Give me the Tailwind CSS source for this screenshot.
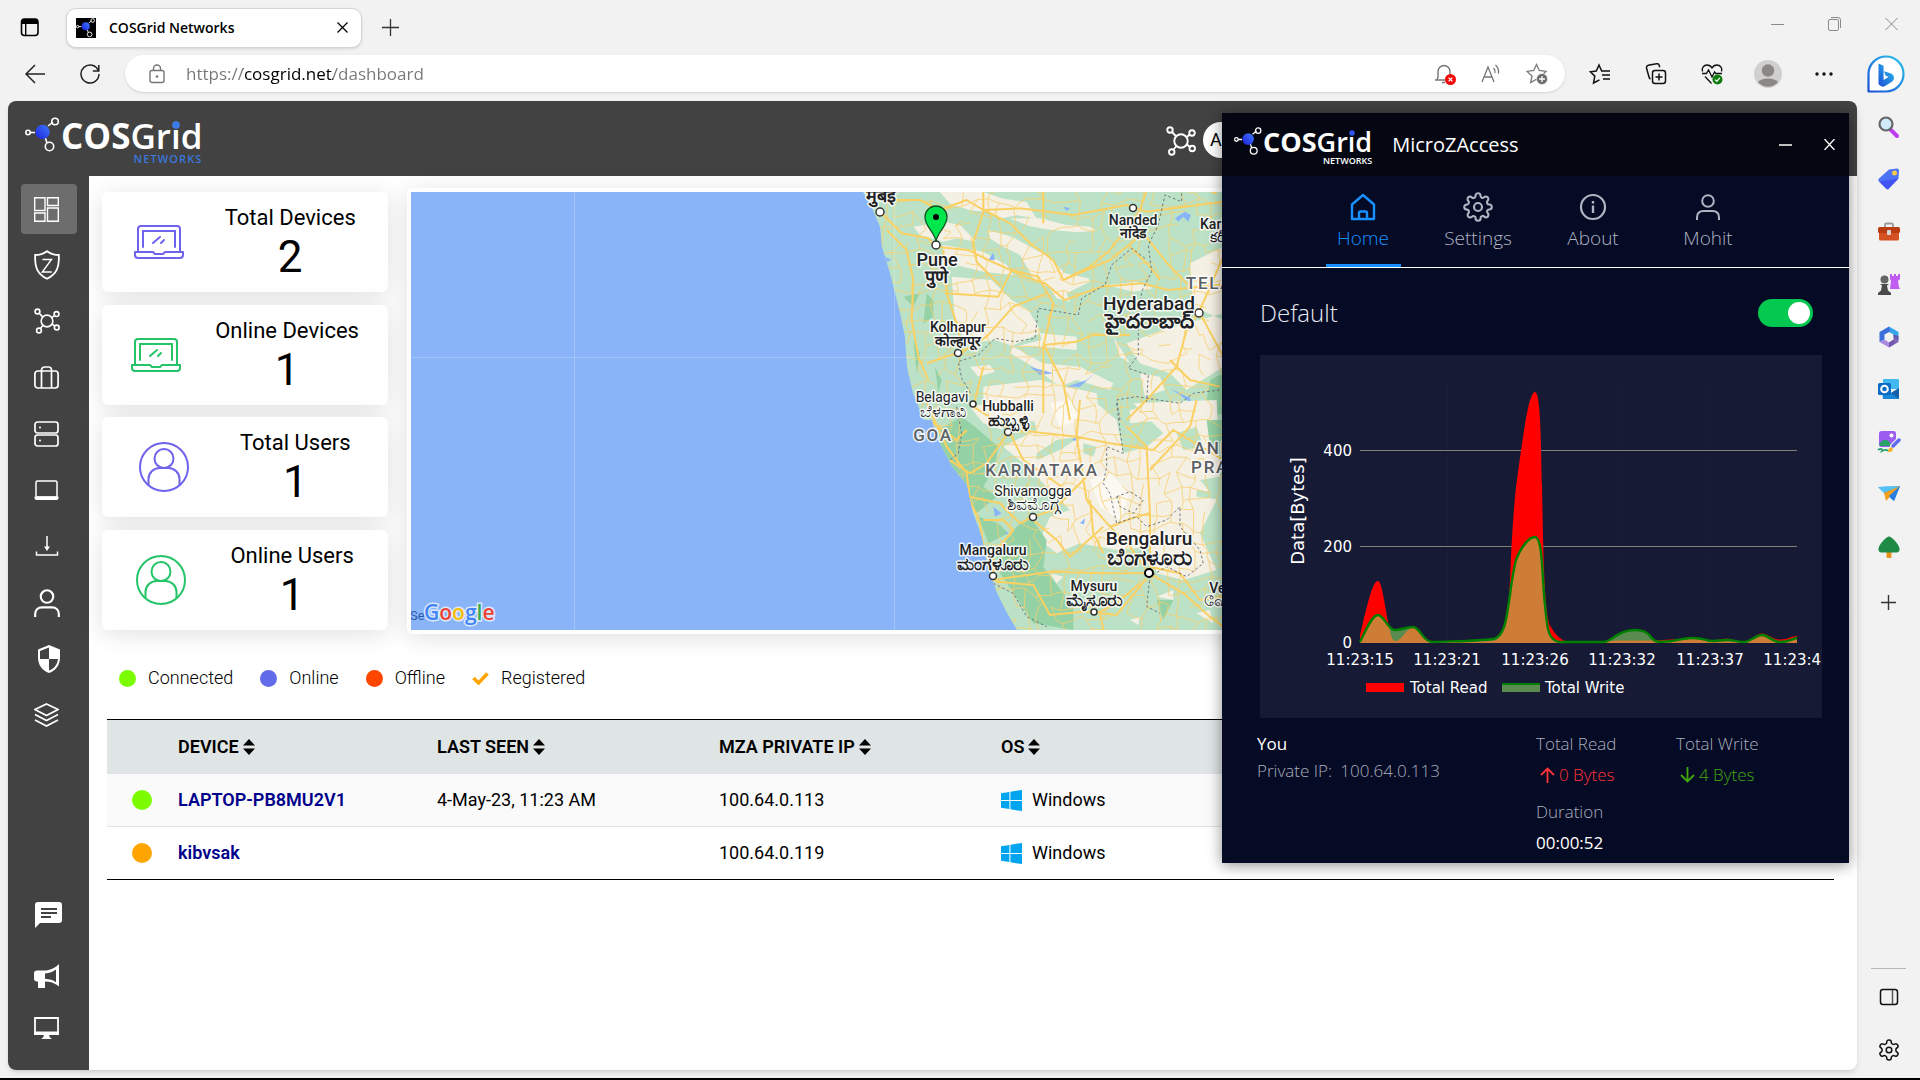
<!DOCTYPE html>
<html lang="en">
<head>
    <meta charset="UTF-8">
    <meta name="viewport" content="width=device-width, initial-scale=1.0">
    <title>COSGrid Networks</title>
    <script src="https://cdn.jsdelivr.net/npm/@tailwindcss/browser@4"></script>
    <style>
        body {
            font-family: 'Roboto', sans-serif;
        }
        .chrome {
            font-family: 'Open Sans', sans-serif;
        }
        .app {
            font-family: 'Open Sans', sans-serif;
        }
        .map-label {
            paint-order: stroke;
            stroke: #fff;
            stroke-width: 3px;
            stroke-linejoin: round;
            stroke-opacity: .85;
            text-anchor: middle;
        }
    </style>
</head>
<body class="bg-[#f2f2f2] text-black h-screen flex flex-col overflow-hidden relative">

    <!-- Shared icons -->
    <svg class="absolute w-0 h-0">
        <symbol id="hub" viewBox="0 0 24 24">
            <g fill="none" stroke="currentColor" stroke-width="1.5">
                <circle cx="12" cy="12" r="5.4" />
                <circle cx="3.2" cy="3.2" r="2.2" /><circle cx="20.8" cy="5.6" r="2.2" />
                <circle cx="4.6" cy="20.8" r="2.2" /><circle cx="21" cy="18" r="2.2" />
                <path d="M4.8 4.8 8 8.2M19 6.8 16.5 9M5.8 19 8.4 16M19.2 16.8 16.8 14.8" />
            </g>
        </symbol>
        <symbol id="laptop" viewBox="0 0 50 34">
            <g fill="none" stroke="currentColor" stroke-width="2" stroke-linecap="round">
                <path d="M4 26V4a3 3 0 0 1 3-3h36a3 3 0 0 1 3 3v22" />
                <path d="M9 22V6h32v16" />
                <path d="M1 27h18l2 2h8l2-2h18v3a3 3 0 0 1-3 3H4a3 3 0 0 1-3-3z" stroke-linejoin="round" />
                <path d="m19 18 7-6M27 18l3-3" />
            </g>
        </symbol>
        <symbol id="usercircle" viewBox="0 0 50 50">
            <g fill="none" stroke="currentColor" stroke-width="2">
                <circle cx="25" cy="25" r="24" /><circle cx="25" cy="16.500" r="9.500" />
                <path d="M9.500 43V37c0-6 5-11 11-11h9c6 0 11 5 11 11v6" />
            </g>
        </symbol>
        <symbol id="person" viewBox="0 0 24 26">
            <g fill="none" stroke="currentColor" stroke-width="2">
                <circle cx="12" cy="7" r="5.800" />
                <path d="M1 26v-2.500C1 19.500 3.500 17 7.500 17h9c4 0 6.500 2.500 6.500 6.500V26" />
            </g>
        </symbol>
        <linearGradient id="ball" x1="1" y1="0" x2="0" y2="1">
            <stop offset="0" stop-color="#3f7bff" /><stop offset="1" stop-color="#1a1fd8" />
        </linearGradient>
        <symbol id="molecule" viewBox="0 0 36 36">
            <g fill="none" stroke="#fff" stroke-width="1.600">
                <path d="M5 15.500h5M23 9l5-4M20 20l2 6" />
                <circle cx="3" cy="15.500" r="2.200" /><circle cx="30" cy="4.500" r="3.300" /><circle cx="24.500" cy="29.500" r="4.200" />
            </g>
            <circle cx="17.500" cy="15" r="7.200" fill="url(#ball)" />
        </symbol>
        <symbol id="windows" viewBox="0 0 20 20">
            <path fill="#00a4ef" d="M0 3l8-1.200v7.700H0zM9 1.600 20 0v9.500H9zM0 10.500h8v7.700L0 17zM9 10.500h11V20L9 18.400z" />
        </symbol>
        <symbol id="sort" viewBox="0 0 12 16">
            <path fill="currentColor" d="M6 0l6 6.500H0zM6 16l6-6.500H0z" />
        </symbol>
    </svg>

    <!-- Tab strip -->
    <header class="chrome flex items-center h-12 pl-5">
        <button class="mt-[6px]" aria-label="Tab actions">
            <svg class="w-5 h-5" viewBox="0 0 20 20"><rect x="1.500" y="2" width="16.500" height="16.500" rx="3" fill="none" stroke="#000" stroke-width="1.600" /><path d="M1.500 7V5a3 3 0 0 1 3-3H15a3 3 0 0 1 3 3v2zM5 7h1.400v11H5z" /></svg>
        </button>
        <div class="ml-[26px] mt-[7px] w-[296px] h-10 rounded-[10px] bg-white border border-[#d4d4d4] shadow-sm flex items-center px-[9px]">
            <svg class="w-5 h-5 bg-black" viewBox="0 0 36 36"><use href="#molecule" /></svg>
            <span class="ml-[13px] text-sm font-semibold">COSGrid Networks</span>
            <button class="ml-auto mr-1" aria-label="Close tab">
                <svg class="w-[11px] h-[11px]" viewBox="0 0 11 11"><path d="M.5.500l10 10M10.500.500l-10 10" stroke="#000" stroke-width="1.300" /></svg>
            </button>
        </div>
        <button class="ml-5 mt-[6px]" aria-label="New tab">
            <svg class="w-[17px] h-[17px]" viewBox="0 0 17 17"><path d="M8.500 0v17M0 8.500h17" stroke="#333" stroke-width="1.300" /></svg>
        </button>
        <div class="ml-auto flex items-center text-[#8a8a8a]">
            <button class="w-[57px] flex justify-center" aria-label="Minimize"><svg class="w-[13px] h-[14px]" viewBox="0 0 13 14"><path d="M0 7.500h13" stroke="currentColor" /></svg></button>
            <button class="w-[57px] flex justify-center" aria-label="Restore"><svg class="w-[13px] h-[14px]" viewBox="0 0 13 14"><g fill="none" stroke="currentColor"><rect x=".5" y="2.500" width="10" height="11" rx="1.500" /><path d="M3 .5h7a2.500 2.500 0 0 1 2.500 2.500v8" /></g></svg></button>
            <button class="w-[57px] flex justify-center" aria-label="Close"><svg class="w-[13px] h-[14px]" viewBox="0 0 13 14"><path d="M.5 1l12 12M12.500 1l-12 12" stroke="currentColor" /></svg></button>
        </div>
    </header>

    <!-- Address bar -->
    <div class="chrome flex items-center h-[51px]">
        <div class="w-[125px] flex items-center pl-[25px] gap-[35px]">
            <button aria-label="Back"><svg class="w-5 h-5" viewBox="0 0 20 20"><path d="M20 10H1M10 1l-9 9 9 9" fill="none" stroke="#222" stroke-width="1.500" /></svg></button>
            <button aria-label="Refresh"><svg class="w-5 h-5" viewBox="0 0 20 20"><path d="M18.500 7A9 9 0 1 0 19 10M18.800 1v6h-6" fill="none" stroke="#222" stroke-width="1.500" /></svg></button>
        </div>
        <div class="flex-1 h-[37px] bg-white rounded-full shadow-sm flex items-center pl-[24px] pr-[17px] text-[#767676]">
            <svg class="w-4 h-5" viewBox="0 0 16 20"><g fill="none" stroke="currentColor" stroke-width="1.400"><rect x="1" y="6.500" width="14" height="12" rx="2" /><path d="M4.500 6.500V4.500a3.500 3.500 0 0 1 7 0v2" /></g><circle cx="8" cy="12.500" r="1.300" fill="currentColor" /></svg>
            <!-- The host name is darker than the rest of the address -->
            <input type="text" aria-label="Address" value="https://cosgrid.net/dashboard" class="flex-1 ml-[21px] text-[17px] leading-6 outline-none text-transparent bg-clip-text bg-[linear-gradient(to_right,#767676_57px,#000_57px,#000_147px,#767676_147px)]">
            <div class="flex items-center gap-[24px]">
                <button aria-label="Notifications blocked"><svg class="w-[22px] h-[22px]" viewBox="0 0 22 22"><path d="M1 17h10M3 17l1-3V8.500a6 6 0 0 1 12 0V12M8 19.500h3" fill="none" stroke="currentColor" stroke-width="1.400" /><circle cx="16.500" cy="16.500" r="5.500" fill="#f00808" /><path d="M14.600 14.600l3.800 3.800M18.400 14.600l-3.800 3.800" stroke="#fff" stroke-width="1.300" /></svg></button>
                <button aria-label="Read aloud"><svg class="w-[22px] h-[22px]" viewBox="0 0 22 22"><path d="M2 19 8 4l6 15M4.200 14h7.700M13.500 5a6 6 0 0 1 1.500 5M15.500 2a10 10 0 0 1 3 8.500" fill="none" stroke="currentColor" stroke-width="1.300" /></svg></button>
                <button aria-label="Add to favorites"><svg class="w-[22px] h-[22px]" viewBox="0 0 22 22"><path d="M10.500 1.500l2.800 6 6.700.9-5 4.600 1.300 6.500-5.800-3.200-5.800 3.200L6 13 1 8.400l6.700-.9z" fill="none" stroke="currentColor" stroke-width="1.300" /><circle cx="16" cy="16" r="5.500" fill="#6b6b6b" stroke="#fff" stroke-width=".6" /><path d="M16 13v6M13 16h6" stroke="#fff" stroke-width="1.300" /></svg></button>
            </div>
        </div>
        <div class="flex items-center ml-[7px]">
            <button class="w-14 flex justify-center" aria-label="Favorites"><svg class="w-[22px] h-[22px]" viewBox="0 0 22 22"><path d="M13 8h-.3L10 2 7.300 8l-6 .8 4.500 4.300L4.500 20l6-3.200M13 8h8M13 12h8M14 16h7" fill="none" stroke="#111" stroke-width="1.500" /></svg></button>
            <button class="w-14 flex justify-center" aria-label="Collections"><svg class="w-[22px] h-[22px]" viewBox="0 0 22 22"><g fill="none" stroke="#111" stroke-width="1.500"><rect x="7.500" y="7.500" width="13" height="13" rx="2.500" /><path d="M5.500 16a3 3 0 0 1-1.500-2L1.500 5A2.500 2.500 0 0 1 3.300 2.300l8-1.500a2.500 2.500 0 0 1 3 1.800l.4 1.600M14 10.500v7M10.500 14h7" /></g></svg></button>
            <button class="w-14 flex justify-center" aria-label="Browser essentials"><svg class="w-[22px] h-[22px]" viewBox="0 0 22 22"><g fill="none" stroke="#111" stroke-width="1.300"><path d="M1.500 8.500C.5 4.500 3 2 6 2c2 0 3.800 1 5 3 1.200-2 3-3 5-3 3 0 5.500 2.500 4.500 6.500M4 13.500l6.500 7" /><path d="M1 10.500h4.500l2-3.500 3.500 7 2.500-5 1.200 1.500H21" /></g><circle cx="16.500" cy="16.500" r="5" fill="#107c10" /><path d="M14 16.600l1.800 1.800 3-3.500" fill="none" stroke="#fff" stroke-width="1.200" /></svg></button>
            <button class="w-14 flex justify-center" aria-label="Profile"><svg class="w-7 h-7" viewBox="0 0 28 28"><circle cx="14" cy="14" r="14" fill="#d2d0ce" /><circle cx="14" cy="10.500" r="6.200" fill="#8a8886" /><path d="M4 22a11 6 0 0 1 20 0 13 13 0 0 1-20 0z" fill="#8a8886" /></svg></button>
            <button class="w-14 flex justify-center" aria-label="More"><svg class="w-[18px] h-1" viewBox="0 0 18 4"><g fill="#111"><circle cx="2" cy="2" r="1.700" /><circle cx="9" cy="2" r="1.700" /><circle cx="16" cy="2" r="1.700" /></g></svg></button>
            <button class="w-[68px] flex justify-center" aria-label="Discover">
                <svg class="w-[38px] h-[38px]" viewBox="0 0 38 38">
                    <defs><linearGradient id="bing" x1="0" y1="1" x2="1" y2="0"><stop offset="0" stop-color="#1b4fd6" /><stop offset="1" stop-color="#2bc4ee" /></linearGradient></defs>
                    <path d="M1.500 36.500V19A17.500 17.500 0 1 1 19 36.500z" fill="#fff" stroke="url(#bing)" stroke-width="2.200" stroke-linejoin="round" />
                    <path d="M11.500 8.500l4.500 2a1 1 0 0 1 .6 1v13.500l5-3-2.600-1.200a1 1 0 0 1-.6-.6l-1.300-4 7 2.300c3.500 1.500 4 6.500.5 8.500l-6.500 4c-1.500.9-3 .8-4.200 0l-1.500-1a2 2 0 0 1-.9-1.700z" fill="url(#bing)" />
                </svg>
            </button>
        </div>
    </div>

    <div class="flex-1 flex min-h-0 mt-[2px] pl-2 mb-[10px]">

        <!-- Dashboard page -->
        <div class="flex-1 flex flex-col bg-white rounded-lg overflow-hidden shadow-md">
            <header class="h-[75px] shrink-0 bg-[#424242] flex items-center">
                <a href="#" class="chrome ml-[17px] mb-[7px] flex items-center text-white leading-none">
                    <svg class="w-9 h-9"><use href="#molecule" /></svg>
                    <span class="relative block text-[35px] font-bold">COS<span class="font-semibold">Gr<span class="relative">i<span class="absolute left-1/2 -translate-x-1/2 top-[9px] w-2 h-2 rounded-full bg-[#3f7be8] outline-1 outline-[#424242]"></span></span>d</span>
                        <span class="absolute right-0 top-[35px] text-[11px] font-semibold tracking-widest text-[#3b77dc]">NETWORKS</span>
                    </span>
                </a>
                <svg class="w-[30px] h-[30px] ml-auto mt-1 text-white"><use href="#hub" /></svg>
                <span class="ml-[7px] mr-[618px] mt-[2px] w-[36px] h-[36px] rounded-full bg-white text-lg flex items-center pl-[7px]">A</span>
            </header>

            <div class="flex-1 flex min-h-0">
                <nav class="w-[81px] shrink-0 bg-[#424242] text-white flex flex-col items-center pt-2 pb-[31px]">
                    <div class="flex flex-col justify-between h-[556px]">
                        <a href="#" aria-label="Dashboard" class="w-14 h-[50px] pr-1 rounded bg-[#6d6d6d] flex items-center justify-center"><svg class="w-[25px] h-[25px]" viewBox="0 0 25 25"><g fill="none" stroke="currentColor" stroke-width="1.400"><path d="M.7.700h10.300v12.800H.7zM13.500.700h10.800v7.800H13.500zM.7 16h10.300v8.300H.7zM13.500 11h10.800v13.300H13.500z" /></g></svg></a>
                        <a href="#" aria-label="Zero trust" class="w-14 h-[50px] pr-1 flex items-center justify-center"><svg class="w-[26px] h-[30px]" viewBox="0 0 26 30"><g fill="none" stroke="currentColor"><path stroke-width="1.800" d="M13 1.200C9.500 3.800 5.500 5 1.200 5c-.6 12 2 19 11.800 23.800C22.800 24 25.400 17 24.800 5 20.500 5 16.500 3.800 13 1.200z" /><path stroke-width="1.400" d="M8.500 9.500h9l-9.200 12.500h9.500" /></g></svg></a>
                        <a href="#" aria-label="Network" class="w-14 h-[50px] pr-1 flex items-center justify-center"><svg class="w-[26px] h-[26px]"><use href="#hub" /></svg></a>
                        <a href="#" aria-label="Assets" class="w-14 h-[50px] pr-1 flex items-center justify-center"><svg class="w-[25px] h-[23px]" viewBox="0 0 25 23"><g fill="none" stroke="currentColor" stroke-width="1.700"><rect x=".9" y="5" width="23.200" height="17" rx="3" /><path d="M7.500 22V4a3 3 0 0 1 3-3h4a3 3 0 0 1 3 3v18" /></g></svg></a>
                        <a href="#" aria-label="Servers" class="w-14 h-[50px] pr-1 flex items-center justify-center"><svg class="w-[25px] h-[26px]" viewBox="0 0 25 26"><g fill="none" stroke="currentColor" stroke-width="1.700"><rect x="1" y="1" width="23" height="11" rx="2.500" /><rect x="1" y="14" width="23" height="11" rx="2.500" /></g><circle cx="6" cy="6.500" r="1" fill="#fff" /><circle cx="6" cy="19.500" r="1" fill="#fff" /></svg></a>
                        <a href="#" aria-label="Devices" class="w-14 h-[50px] pr-1 flex items-center justify-center"><svg class="w-[25px] h-[20px]" viewBox="0 0 25 20"><rect x="2" y="1" width="21" height="16" rx="1.500" fill="none" stroke="currentColor" stroke-width="1.500" /><path d="M.5 16.500h24v1.500a2 2 0 0 1-2 2h-20a2 2 0 0 1-2-2z" fill="currentColor" /></svg></a>
                        <a href="#" aria-label="Downloads" class="w-14 h-[50px] pr-1 flex items-center justify-center"><svg class="w-[24px] h-[20px]" viewBox="0 0 24 20"><path d="M12 0v12M1.500 15.500V19h21v-3.500" fill="none" stroke="currentColor" stroke-width="1.500" /><path d="M9 10.500h6l-3 4.500z" fill="currentColor" /></svg></a>
                        <a href="#" aria-label="Users" class="w-14 h-[50px] pr-1 flex items-center justify-center"><svg class="w-[26px] h-[28px]"><use href="#person" /></svg></a>
                        <a href="#" aria-label="Security" class="w-14 h-[50px] flex items-center justify-center"><svg class="w-[22px] h-[28px]" viewBox="0 0 22 28"><path fill="currentColor" d="M11 0l11 4.500V12c0 8-4 13.500-11 16C4 25.500 0 20 0 12V4.500z" /><path fill="#424242" d="M11 2.500 2 6v8h9zM11 14h9c-.6 5.500-3.500 9.500-9 11.500z" /></svg></a>
                        <a href="#" aria-label="Policies" class="w-14 h-[50px] pr-1 flex items-center justify-center"><svg class="w-[25px] h-[24px]" viewBox="0 0 25 24"><path d="M12.500 1 24 6.500l-11.500 6L1 6.500zM1 11.500l11.500 6 11.500-6M1 17l11.500 6L24 17" fill="none" stroke="currentColor" stroke-width="1.700" /></svg></a>
                    </div>
                    <div class="mt-auto pr-1 flex flex-col items-center">
                        <a href="#" aria-label="Chat" class="pl-1 mb-9"><svg class="w-[27px] h-[26px]" viewBox="0 0 27 26"><path fill="currentColor" d="M3 0h21a3 3 0 0 1 3 3v15a3 3 0 0 1-3 3H5l-5 5V3a3 3 0 0 1 3-3z" /><path d="M6 7h16M6 11h16M6 15h10" stroke="#424242" stroke-width="2" /></svg></a>
                        <a href="#" aria-label="Announcements" class="mb-[29px]"><svg class="w-[25px] h-[24px]" viewBox="0 0 25 24"><path fill="currentColor" fill-rule="evenodd" d="M25 0v22.500c-3-2.500-6.500-4.300-10.500-4.800L11 17.500V24H4v-6.500H3a3 3 0 0 1-3-3V9.500a3 3 0 0 1 3-3h7C16 6.500 21 4 25 0zM22 5.500c-3.200 2.300-6.500 3.600-11 4v5.300c4.500.3 8 1.500 11 3.400z" /></svg></a>
                        <a href="#" aria-label="Monitor"><svg class="w-[25px] h-[22px]" viewBox="0 0 25 22"><path d="M1 1h23v15H1z" fill="none" stroke="currentColor" stroke-width="1.800" /><path fill="currentColor" d="M0 14.500h25V18H15l1 2.500 2 1.500H7l2-1.500L10 18H0z" /></svg></a>
                    </div>
                </nav>

                <main class="flex-1 min-w-0 pt-4">
                    <div class="flex h-[438px] pl-[13px] pr-[23px] gap-[19px]">
                        <!-- Stats -->
                        <div class="w-[286px] shrink-0 flex flex-col justify-between">
                            <section class="h-[100px] px-3 bg-white rounded-md shadow-[0_4px_24px_rgba(0,0,0,0.12)] flex items-center justify-around">
                                <svg class="w-[50px] h-[34px] text-[#6f63ee]"><use href="#laptop" /></svg>
                                <div class="text-center"><h2 class="text-[22px] leading-[30px]">Total Devices</h2><p class="text-[44px] leading-[48px]">2</p></div>
                            </section>
                            <section class="h-[100px] px-3 bg-white rounded-md shadow-[0_4px_24px_rgba(0,0,0,0.12)] flex items-center justify-around">
                                <svg class="w-[50px] h-[34px] text-[#26c468]"><use href="#laptop" /></svg>
                                <div class="text-center"><h2 class="text-[22px] leading-[30px]">Online Devices</h2><p class="text-[44px] leading-[48px]">1</p></div>
                            </section>
                            <section class="h-[100px] px-3 bg-white rounded-md shadow-[0_4px_24px_rgba(0,0,0,0.12)] flex items-center justify-around">
                                <svg class="w-[50px] h-[50px] text-[#6f63ee]"><use href="#usercircle" /></svg>
                                <div class="text-center"><h2 class="text-[22px] leading-[30px]">Total Users</h2><p class="text-[44px] leading-[48px]">1</p></div>
                            </section>
                            <section class="h-[100px] px-3 bg-white rounded-md shadow-[0_4px_24px_rgba(0,0,0,0.12)] flex items-center justify-around">
                                <svg class="w-[50px] h-[50px] text-[#26c468]"><use href="#usercircle" /></svg>
                                <div class="text-center"><h2 class="text-[22px] leading-[30px]">Online Users</h2><p class="text-[44px] leading-[48px]">1</p></div>
                            </section>
                        </div>

                        <!-- Map -->
                        <div class="flex-1 -my-1 border-4 border-white rounded-md shadow-[0_4px_24px_rgba(0,0,0,0.12)]">
                            <svg id="map" class="block w-full h-full bg-[#8ab4f8]" viewBox="0 0 1423 438" preserveAspectRatio="xMinYMin slice">
                                <defs>
                                    <clipPath id="land"><path d="M452 0l9 16 8 19 2 20 8 26 10 40 5 24 2 30 6 26 11 27 8 0 5 17 10 20 6 11 14 17 6 28 9 24 6 30 9 26 10 20 10 17H1423V0z" /></clipPath>
                                </defs>
                                <g clip-path="url(#land)">
                                    <path fill="#bbe2c6" d="M440 0h983v438H440z" />
                                    <!-- northern half -->
                                    <g transform="translate(439 -12) scale(.3333)" fill="#f5f0e4">
                                        <path d="M270 36h130l60 20 70 10 30 50-60-10-50 10-30-20-60-5-60-20zM480 115l90 0 80 20 70 5 20 12-60 5-80-8-60-10zM415 150l70 20 110 60 50 50 70 15 5 10-70 35 10 25-40-10-20-30-50-30-40-70-60-30-30-20zM190 140l90-15 50 10 50 50-60-10-40 10-70-20zM280 195l120 20 70 40 20 30-90-10-120-30zM305 290l120 10 60 60 50 30 30 50 10 40-80 20-60-20-80 10-40-60zM480 500l90 0 110 10 0-40-110-10zM490 500l90 50 110 10 100 50-10 20-100-30-50 20-80-60-70-40zM400 620l170-20 80 20 90 20 10 90-350-10zM360 560l60-5 15 20-50 15zM830 490l40 60 90 30 50 50 110-70V400l-180 50zM790 470l50 80-30-20zM1020 250l100-50v220l-90-40zM770 315l90-10 50 20-60 10zM840 690l90-20 20 50-110 10zM870 580l60 10 15 40-60 20z" />
                                        <path fill="#94d2a5" d="M230 340l20 20 0 50-30 20zM160 350l50-10-20 40zM255 560l20 40-10 40zM1080 600l40-20v120l-60 20zM190 480l20 40-10 60z" />
                                        <path fill="#8ab4f8" d="M975 115l30-20 18 10-8 20-15-15-15 15zM415 240l15-22 5 22zM640 80l20 5-10 8zM540 560l70 20-40 5zM650 620l60-20 30-25-50 45zM960 625l60 30 5 15zM105 230l20 10-15 5z" />
                                    </g>
                                    <!-- southern half -->
                                    <g transform="translate(439 208) scale(.3333)" fill="#f5f0e4">
                                        <path d="M540 10h200l60 50 20 100 70-20 50-40-90-90 250-10 10 230-60 10 50 60-50 100 50 110-100 30-80-20-20-80-100 10-110-20-70 30-50-40 30-70 60-20-60-60-80-80-60-50 100-50z" />
                                        <path d="M360 20l60-10 40 80-60-20zM920 590l50-20 0 30zM840 660l30-10-5 25zM1040 640l40-10 10 40zM600 520l40 10-20 20z" />
                                        <path fill="#bbe2c6" d="M560 160l60-40 70-10-60 40-70 30zM700 130l40 10-10 30-30-10zM1040 270l80 10v20l-80-10zM980 100l60-20 20 60-60 10z" />
                                        <path fill="#fcf8f2" d="M600 10l60-10 30 60-60 20zM720 240l60-20 60 60-30 80-60-40z" />
                                        <path fill="#94d2a5" d="M265 90l70-40 40 30 70 60-10 60-35 60 40 30-60 50-60-120-50-70zM385 350l60 20 30 30-60 30zM500 380l40-30 50 70-10 80 90 120 0 70-120-20-100-150-10-60zM920 600l50 0-30 60zM1070 60h60v120l-50-40z" />
                                        <path fill="#8ab4f8" d="M430 320l25 20-20 10zM665 120l15-10-2 12zM690 370l15-15-3 18zM465 400l10-6-5 10z" />
                                    </g>
                                    <g id="minor" fill="none" stroke="#f8cf6f" stroke-width=".8"></g>
                                    <g fill="none" stroke-linejoin="round" stroke="#fad063" stroke-width="6">
                                        <path transform="translate(439 -12) scale(.3333)" d="M130 60l80 0 60 30 80-30 50 30 110-5 160 20 160-30 60 20 230-30M400 36l0 60-30 90 10 60 70 70M95 100l60 60 80 15 20 25 100 10 60 30 110 50 60 20 60 50 110-40 120-10 80 20 200-20M110 150l60 60 20 90-5 120 20 110 30 70M280 210l10 130 30 90 20 90M285 340l160 10 40-80 80 20 45 80-30 130 0 200M330 520l80-50 80-90 100-40M400 90l80 40 60 60 70 50 30 60 80-40 60-50 90-120 20-60 150-10 60 20M580 130l0-94M640 300l140-60 100-80 80 100 60 60M580 495l100-10 50-20 110 0M840 200l60 60 30 40M230 550l90-30M370 680l30-120M1050 390l-40 60-30 110-90 100-60 60M1050 390l70-160M1050 400l70 130M580 490l60 120 20 110M960 540l60 60 90 20" />
                                        <path transform="translate(439 208) scale(.3333)" d="M230 10l60 130 60 80 10 80 30 70 20 130 40 120 40 70M240 60l80 60 30-30M300 180l60 40 50-30 70-100-110-70M480 100l40 80 130 90M500 90l180 20 100 20 130 20 60-60 150 90M680 110l30 190 70 80 80-30 40-10-10-200-60-60M360 290l90 20 60 60 40-20 60-20 60-60 60-60M550 360l70 60 40 50 100-90M400 360l60 0 30 30-60 70 0 60M430 540l170-25 160 5 130 0 20 0M440 545l110 10 50 90 100-10 20 0 80 10 90-110M740 640l60-30 70-60M900 340l0 160 90 20 60 80 70-10M900 520l100 60 80 70 40 30M780 380l60 60 50 70M690 0l-10 110M900 210l120-130 20-80M760 690l-10-50M720 300l10 100 30 60" />
                                    </g>
                                    <g fill="none" stroke="#6f7780" stroke-width="3" stroke-dasharray="8 7">
                                        <path transform="translate(439 -12) scale(.3333)" d="M995 40l0 25-50-20-20 90-30 60 10 80-30 60-10 120 0 70-30 40 60 20-5 80M885 235l-40-30-60 50-20 60-70 40-10 50-120-20-10 90-60 10-60-10-50 50-60 20 10 50 30 50M810 720l-10-60 60-10 130 20 40-30 80-10" />
                                        <path transform="translate(439 208) scale(.3333)" d="M320 20l15 80-10 60-25 20M800 10l10 80 10 70-50-20 0 60-10 50 20 30 20 90 60-20 30 30 60-20 40-40 0 60 60 70 10 40-50 40-60-30-50 30-10 90 40 20M800 290l40-15 40 25-30 40-40-20zM430 550l60 30 40 70 60 30" />
                                    </g>
                                </g>
                                <path d="M163.500 0v438M483.500 0v438M0 165.500h1423" stroke="#fff" stroke-opacity=".22" />

                                <!-- City markers -->
                                <g fill="#fff" stroke="#333" stroke-width="1.500">
                                    <circle cx="469" cy="20" r="4" /><circle cx="525" cy="53" r="4" /><circle cx="722" cy="16" r="3.500" /><circle cx="547" cy="161" r="3.500" /><circle cx="788" cy="121" r="4" /><circle cx="562" cy="212" r="3" /><circle cx="597" cy="240" r="3.500" /><circle cx="622" cy="325" r="3.500" /><circle cx="582" cy="384" r="3.500" /><circle cx="738" cy="381" r="4" stroke="#000" stroke-width="2" /><circle cx="683" cy="420" r="3" />
                                </g>
                                <g class="map-label" fill="#202124" font-weight="500" font-size="14">
                                    <text x="470" y="10" font-size="18" font-weight="700">मुंबई</text>
                                    <text x="526" y="74" font-size="18">Pune</text><text x="525" y="91" font-size="18" font-weight="700">पुणे</text>
                                    <text x="722" y="33">Nanded</text><text x="722" y="46" font-weight="700">नांदेड</text>
                                    <text x="789" y="37" text-anchor="start">Karim</text><text x="799" y="50" text-anchor="start">కరీం</text>
                                    <text x="547" y="140">Kolhapur</text><text x="547" y="154" font-weight="700">कोल्हापूर</text>
                                    <text x="738" y="118" font-size="19">Hyderabad</text><text x="738" y="136" font-size="20" font-weight="700">హైదరాబాద్</text>
                                    <text x="531" y="210" font-weight="400">Belagavi</text><text x="532" y="225" font-size="16" font-weight="400">ಬೆಳಗಾವಿ</text>
                                    <text x="597" y="219">Hubballi</text><text x="597" y="234" font-size="17" font-weight="700">ಹುಬ್ಬಳ್ಳಿ</text>
                                    <text x="622" y="304" font-weight="400">Shivamogga</text><text x="622" y="318" font-size="17" font-weight="400">ಶಿವಮೊಗ್ಗ</text>
                                    <text x="582" y="363">Mangaluru</text><text x="582" y="378" font-size="18" font-weight="700">ಮಂಗಳೂರು</text>
                                    <text x="738" y="353" font-size="19">Bengaluru</text><text x="738" y="373" font-size="23" font-weight="700">ಬೆಂಗಳೂರು</text>
                                    <text x="683" y="399">Mysuru</text><text x="683" y="414" font-size="18" font-weight="700">ಮೈಸೂರು</text>
                                    <text x="820" y="401">Vellore</text><text x="816" y="414">வேலூர்</text>
                                </g>
                                <g class="map-label tracking-widest" fill="#5c6166" font-weight="500" font-size="17">
                                    <text x="522" y="249">GOA</text><text x="631" y="284">KARNATAKA</text>
                                    <text x="832" y="97">TELANGANA</text><text x="822" y="262">ANDHRA</text><text x="824" y="281">PRADESH</text>
                                </g>
                                <!-- Pin -->
                                <path d="M525 50c-1-10-11-15-11-25a11 11 0 0 1 22 0c0 10-10 15-11 25z" fill="#00e64d" stroke="#145523" stroke-width="1.300" />
                                <circle cx="525" cy="25" r="3" />
                                <text x="-1" y="428" font-size="13" fill="#2a5db0">Se</text>
                                <text x="13" y="428" font-family="Open Sans" font-weight="600" font-size="21" stroke="#fff" stroke-opacity=".7" stroke-width="3" paint-order="stroke"><tspan fill="#4285f4">G</tspan><tspan fill="#ea4335">o</tspan><tspan fill="#fbbc05">o</tspan><tspan fill="#4285f4">g</tspan><tspan fill="#34a853">l</tspan><tspan fill="#ea4335">e</tspan></text>
                            </svg>
                        </div>
                    </div>

                    <!-- Legend -->
                    <ul class="flex items-center gap-[27px] mt-[36px] pl-[30px] text-lg leading-6 font-light">
                        <li class="flex items-center gap-3"><span class="w-[17px] h-[17px] rounded-full bg-[#7cfc00]"></span>Connected</li>
                        <li class="flex items-center gap-3"><span class="w-[17px] h-[17px] rounded-full bg-[#626be8]"></span>Online</li>
                        <li class="flex items-center gap-3"><span class="w-[17px] h-[17px] rounded-full bg-[#ff4500]"></span>Offline</li>
                        <li class="flex items-center gap-3"><svg class="w-[17px] h-[13px]" viewBox="0 0 17 13"><path d="M1.500 6l5 5 9-9.500" fill="none" stroke="orange" stroke-width="3.500" /></svg>Registered</li>
                    </ul>

                    <!-- Devices -->
                    <div class="mt-[29px] pl-[18px] pr-[23px]">
                        <table class="w-full table-fixed border-y border-black text-left text-lg leading-6">
                            <colgroup><col class="w-[71px]"><col class="w-[259px]"><col class="w-[282px]"><col class="w-[282px]"><col></colgroup>
                            <thead class="bg-[#dfe5e5]">
                                <tr class="h-[54px] border-b border-[#dee2e6]">
                                    <th aria-label="Status"></th>
                                    <th><button class="flex items-center gap-1 font-semibold">DEVICE <svg class="w-3 h-4"><use href="#sort" /></svg></button></th>
                                    <th><button class="flex items-center gap-1 font-semibold">LAST SEEN <svg class="w-3 h-4"><use href="#sort" /></svg></button></th>
                                    <th><button class="flex items-center gap-1 font-semibold">MZA PRIVATE IP <svg class="w-3 h-4"><use href="#sort" /></svg></button></th>
                                    <th><button class="flex items-center gap-1 font-semibold">OS <svg class="w-3 h-4"><use href="#sort" /></svg></button></th>
                                </tr>
                            </thead>
                            <tbody>
                                <tr class="h-[53px] border-b border-[#dee2e6] bg-[#fafafa]">
                                    <td><span class="block ml-[25px] w-5 h-5 rounded-full bg-[#7cfc00]"></span></td>
                                    <td><a href="#" class="font-semibold text-[#00008b]">LAPTOP-PB8MU2V1</a></td>
                                    <td>4-May-23, 11:23 AM</td>
                                    <td>100.64.0.113</td>
                                    <td><span class="flex items-center gap-[10px]"><svg class="w-[21px] h-[21px]"><use href="#windows" /></svg>Windows</span></td>
                                </tr>
                                <tr class="h-[53px]">
                                    <td><span class="block ml-[25px] w-5 h-5 rounded-full bg-[#ffa500]"></span></td>
                                    <td><a href="#" class="font-semibold text-[#00008b]">kibvsak</a></td>
                                    <td></td>
                                    <td>100.64.0.119</td>
                                    <td><span class="flex items-center gap-[10px]"><svg class="w-[21px] h-[21px]"><use href="#windows" /></svg>Windows</span></td>
                                </tr>
                            </tbody>
                        </table>
                    </div>
                </main>
            </div>
        </div>

        <!-- Browser side bar -->
        <aside class="w-[63px] flex flex-col items-center">
            <div class="flex flex-col justify-between h-[500px] mt-[14px]">
                <button class="w-6 h-6" aria-label="Search"><svg viewBox="0 0 24 24"><path d="M14 15l6 6" stroke="#c13df0" stroke-width="4" stroke-linecap="round" /><circle cx="9" cy="9" r="6.500" fill="#cfeaf8" stroke="#666" stroke-width="2.200" /></svg></button>
                <button class="w-6 h-6" aria-label="Shopping"><svg viewBox="0 0 24 24"><path d="M12 2.500l8-1a2 2 0 0 1 2 2l-.5 8L12 21.500a2 2 0 0 1-3 0L2 14.500a2 2 0 0 1 0-3z" fill="#4c73f5" /><path d="M2 14.500l7 7a2 2 0 0 0 3 0l9.500-10z" fill="#3a3fee" opacity=".6" /><circle cx="17.500" cy="6" r="2.500" fill="#f9c846" /></svg></button>
                <button class="w-6 h-6" aria-label="Tools"><svg viewBox="0 0 24 24"><path d="M8 7V5a1.500 1.500 0 0 1 1.500-1.500h5A1.500 1.500 0 0 1 16 5v2" fill="none" stroke="#999" stroke-width="1.800" /><rect x="2" y="11" width="20" height="9.500" rx="1.500" fill="#d35122" /><rect x="1" y="7" width="22" height="6" rx="1.500" fill="#b93d10" /><rect x="10" y="10" width="4" height="5" rx="1" fill="#d8d8d8" /></svg></button>
                <button class="w-6 h-6" aria-label="Games"><svg viewBox="0 0 24 24"><path d="M13 2h2v2h2V2h2v2h2V2h2v5l-2 2 1 6 1 2H13l1-8-1-2z" fill="#c05cf2" /><circle cx="7.500" cy="7.500" r="4" fill="#666" /><path d="M3 12h9l-2 1.500 1 5 3 2.500v2H1v-2l3-2.500 1-5z" fill="#4a4a4a" /></svg></button>
                <button class="w-6 h-6" aria-label="Microsoft 365"><svg viewBox="0 0 24 24"><path d="M12 1.500 21.500 7v8l-5-3V9.500L12 7z" fill="#35a4e8" /><path d="M12 1.500 2.500 7v10l5-2.500v-5L13 6.500z" fill="#3b6fd9" /><path d="M2.500 17 12 22.500l5-3v-5l-5 3-4.500-3z" fill="#a98ae0" /><path d="M21.500 11v6L12 22.500v-5l4.500-3v-5z" fill="#6b4ca8" opacity=".85" /></svg></button>
                <button class="w-6 h-6" aria-label="Outlook"><svg viewBox="0 0 24 24"><path d="M6 3a1 1 0 0 1 1-1h14a1 1 0 0 1 1 1v9H6z" fill="#41b8f0" /><path d="M22 11v10a1 1 0 0 1-1 1H6l-1-8 8 3z" fill="#1a86d8" /><path d="M14 16l8 6V11z" fill="#1560a8" /><rect x="1" y="6" width="13" height="12" rx="1.500" fill="#0a6cc4" /><circle cx="7.500" cy="12" r="3.300" fill="none" stroke="#fff" stroke-width="2" /></svg></button>
                <button class="w-6 h-6" aria-label="Image Creator"><svg viewBox="0 0 24 24"><rect x="2" y="1" width="17" height="16" rx="2.500" fill="#9c5cf0" /><circle cx="14.500" cy="5.500" r="2" fill="#fff" /><path d="M2 14c5-6 9-6 13 2H4.500A2.500 2.500 0 0 1 2 14z" fill="#28a267" /><path d="M1 20c3-2 5-1 4 1 2-1 5-2 6 0" fill="none" stroke="#28a267" stroke-width="1.800" /><path d="M16 16l6-6" stroke="#f2f2f2" stroke-width="6" stroke-linecap="round" /><path d="M16 16l6-6" stroke="#5f6cf2" stroke-width="3.500" stroke-linecap="round" /><path d="M11 22c0-3 1.500-5 3.500-4.500s2.500 5-3.500 4.500z" fill="#f5b324" /></svg></button>
                <button class="w-6 h-6" aria-label="Drop"><svg viewBox="0 0 24 24"><path d="M1 5l22-1-6 15-5-4z" fill="#3a9ef0" /><path d="M1 5l6 6 16-7z" fill="#56c1f5" /><path d="M7 11l16-7L9 19z" fill="#f2a01e" /><path d="M12 14l11-10-6 15z" fill="#2b7ce0" /></svg></button>
                <button class="w-6 h-6" aria-label="E-tree"><svg viewBox="0 0 24 24"><rect x="9.500" y="16" width="5" height="7" rx="1" fill="#e8931c" /><path d="M12 1.500c2.500 0 9.500 7 10.500 12 .4 2.500-1 4-3 4h-15c-2 0-3.400-1.500-3-4 1-5 8-12 10.500-12z" fill="#1f8a44" /></svg></button>
                <button class="w-6 h-6 mt-1 flex items-center justify-center" aria-label="Customize"><svg class="w-[15px] h-[15px]" viewBox="0 0 15 15"><path d="M7.500 0v15M0 7.500h15" stroke="#333" stroke-width="1.400" /></svg></button>
            </div>
            <div class="mt-auto w-[35px] border-t border-[#b8b8b8] flex flex-col items-center pt-[16px] pb-2 gap-[29px]">
                <button aria-label="Hide sidebar"><svg class="block w-6 h-6" viewBox="0 0 24 24"><rect x="3.500" y="4.500" width="17" height="15" rx="2.500" fill="none" stroke="#111" stroke-width="1.500" /><path d="M15.500 5v14" stroke="#555" stroke-width="1.500" /></svg></button>
                <button aria-label="Settings"><svg class="block w-6 h-6" viewBox="0 0 24 24"><g fill="none" stroke="#111" stroke-width="1.500"><path d="M12.220 2h-.44a2 2 0 0 0-2 2v.18a2 2 0 0 1-1 1.730l-.43.25a2 2 0 0 1-2 0l-.15-.08a2 2 0 0 0-2.730.73l-.22.38a2 2 0 0 0 .73 2.730l.15.1a2 2 0 0 1 1 1.720v.51a2 2 0 0 1-1 1.740l-.15.09a2 2 0 0 0-.73 2.730l.22.38a2 2 0 0 0 2.730.73l.15-.08a2 2 0 0 1 2 0l.43.25a2 2 0 0 1 1 1.730V20a2 2 0 0 0 2 2h.44a2 2 0 0 0 2-2v-.18a2 2 0 0 1 1-1.730l.43-.25a2 2 0 0 1 2 0l.15.08a2 2 0 0 0 2.730-.73l.22-.39a2 2 0 0 0-.73-2.730l-.15-.08a2 2 0 0 1-1-1.740v-.5a2 2 0 0 1 1-1.740l.15-.09a2 2 0 0 0 .73-2.730l-.22-.38a2 2 0 0 0-2.730-.73l-.15.08a2 2 0 0 1-2 0l-.43-.25a2 2 0 0 1-1-1.730V4a2 2 0 0 0-2-2z" /><circle cx="12" cy="12" r="2.800" /></g></svg></button>
            </div>
        </aside>
    </div>

    <!-- Task bar edge -->
    <div class="absolute bottom-0 inset-x-0 h-[2px] bg-black"></div>

    <!-- MicroZAccess window -->
    <div class="app absolute top-[113px] right-[71px] w-[627px] bg-[#050a25] text-white shadow-[0_2px_14px_rgba(0,0,0,0.45)]">
        <header class="h-[63px] bg-[#040711] flex items-center pl-3 pr-[14px]">
            <div class="flex items-center leading-none mb-[7px]">
                <svg class="w-[29px] h-[29px]"><use href="#molecule" /></svg>
                <span class="relative block text-[27px] font-bold">COS<span class="font-semibold">Gr<span class="relative">i<span class="absolute left-1/2 -translate-x-1/2 top-[7px] w-[6px] h-[6px] rounded-full bg-[#2f55e8] outline-1 outline-[#040711]"></span></span>d</span>
                    <span class="absolute right-0 top-[28px] text-[9px] font-semibold">NETWORKS</span>
                </span>
            </div>
            <h1 class="ml-5 text-xl font-normal">MicroZAccess</h1>
            <button class="ml-auto" aria-label="Minimize"><svg class="w-[13px] h-[12px]" viewBox="0 0 13 12"><path d="M0 6h13" stroke="#fff" stroke-width="1.500" /></svg></button>
            <button class="ml-8" aria-label="Close"><svg class="w-[11px] h-[11px]" viewBox="0 0 11 11"><path d="M.5 0l10 11M10.500 0l-10 11" stroke="#fff" stroke-width="1.300" /></svg></button>
        </header>

        <nav class="flex justify-center gap-10 border-b border-white text-[19px] leading-6 font-light text-[#b0b5c3]">
            <a href="#" class="w-[75px] pt-4 pb-[14px] border-b-[3px] border-[#1890ff] text-[#1890ff] flex flex-col items-center gap-1"><svg class="w-[30px] h-[30px]" viewBox="0 0 30 30"><path d="M4 12.500 15 3l11 9.500V27H4zM11 27v-6a1.500 1.500 0 0 1 1.500-1.500h5A1.500 1.500 0 0 1 19 21v6" fill="none" stroke="currentColor" stroke-width="2.400" stroke-linejoin="round" /></svg>Home</a>
            <a href="#" class="w-[75px] pt-4 flex flex-col items-center gap-1"><svg class="w-[30px] h-[30px]" viewBox="0 0 24 24"><g fill="none" stroke="currentColor" stroke-width="1.700"><circle cx="12" cy="12" r="3.200" /><path d="M19.400 15a1.650 1.650 0 0 0 .33 1.820l.06.06a2 2 0 0 1 0 2.830 2 2 0 0 1-2.830 0l-.06-.06a1.650 1.650 0 0 0-1.820-.33 1.650 1.650 0 0 0-1 1.510V21a2 2 0 0 1-2 2 2 2 0 0 1-2-2v-.09A1.650 1.650 0 0 0 9 19.400a1.650 1.650 0 0 0-1.820.33l-.06.06a2 2 0 0 1-2.830 0 2 2 0 0 1 0-2.830l.06-.06a1.650 1.650 0 0 0 .33-1.820 1.650 1.650 0 0 0-1.510-1H3a2 2 0 0 1-2-2 2 2 0 0 1 2-2h.09A1.650 1.650 0 0 0 4.600 9a1.650 1.650 0 0 0-.33-1.820l-.06-.06a2 2 0 0 1 0-2.830 2 2 0 0 1 2.830 0l.06.06a1.650 1.650 0 0 0 1.820.33H9a1.650 1.650 0 0 0 1-1.510V3a2 2 0 0 1 2-2 2 2 0 0 1 2 2v.09a1.650 1.650 0 0 0 1 1.510 1.650 1.650 0 0 0 1.820-.33l.06-.06a2 2 0 0 1 2.830 0 2 2 0 0 1 0 2.830l-.06.06a1.650 1.650 0 0 0-.33 1.820V9a1.650 1.650 0 0 0 1.510 1H21a2 2 0 0 1 2 2 2 2 0 0 1-2 2h-.09a1.650 1.650 0 0 0-1.510 1z" /></g></svg>Settings</a>
            <a href="#" class="w-[75px] pt-4 flex flex-col items-center gap-1"><svg class="w-[30px] h-[30px]" viewBox="0 0 30 30"><circle cx="15" cy="15" r="12" fill="none" stroke="currentColor" stroke-width="2.200" /><path d="M15 13.500v7.500M15 9v2.500" stroke="currentColor" stroke-width="2.400" /></svg>About</a>
            <a href="#" class="w-[75px] pt-4 flex flex-col items-center gap-1"><svg class="w-[26px] h-[30px] py-[2px]"><use href="#person" /></svg>Mohit</a>
        </nav>

        <div class="h-[87px] pt-[3px] pl-[38px] pr-9 flex items-center justify-between">
            <label for="connect" class="text-2xl font-light text-[#e9ebf2]">Default</label>
            <span class="relative block w-[55px] h-7">
                <input id="connect" type="checkbox" checked class="appearance-none block w-full h-full rounded-full bg-[#04c950]">
                <span class="absolute right-[3px] top-[3px] w-[22px] h-[22px] rounded-full bg-white pointer-events-none"></span>
            </span>
        </div>

        <!-- Traffic chart -->
        <div class="ml-[38px] mr-[27px] bg-[#161a35] overflow-hidden">
            <svg class="block w-full" viewBox="0 0 562 363" font-family="DejaVu Sans" font-size="15" fill="#fff">
                <path d="M187.500 25v263M275 25v263M363 25v263M450 25v263" stroke="#191d38" />
                <path d="M100 95.500h437M100 191.500h437M100 287.500h437" stroke="#7f7f7a" />
                <path fill="#f00" d="M100 288V280C106 255 112 226 118 226S128 286 135 286 146 273 153 273 164 286 170 286.500Q200 287 233 286C243 284 248 270 250 225Q252 170 256 132C262 90 268 37 275 37 281 37 281 92 282 130 283 180 284 265 291 272Q298 285 308 287H340Q350 285.500 360 285.500H395L432 283 450 286 467 283.500 484 287C490 287 496 278.500 502 278.500S512 284.500 520 284.500 532 281 537 281V288z" />
                <path fill="#9bfa6a" fill-opacity=".5" d="M100 288V287C106 275 112 260 118 260S128 275 135 275 146 272 153 272 162 286 172 287C200 286 220 286 233 284 250 282 247 240 256 205 261 192 269 182 275 182 283 182 282 225 285 250 287 270 287 286 300 286H344C352 286 358 275 375 275S390 286 397 286C415 288 418 283 432 283S445 286 452 286 460 285 467 285 478 287 484 287 496 280 502 280 512 287 520 287 532 284 537 283V288z" />
                <path fill="none" stroke="#008000" stroke-width="2.400" d="M100 287C106 275 112 260 118 260S128 275 135 275 146 272 153 272 162 286 172 287C200 286 220 286 233 284 250 282 247 240 256 205 261 192 269 182 275 182 283 182 282 225 285 250 287 270 287 286 300 287H344C352 286 358 275 375 275S390 286 397 286.500C415 288 418 283 432 283S445 286 452 286 460 285 467 285 478 287 484 287 496 280 502 280 512 287 520 287 532 284 537 283" />
                <g text-anchor="end"><text x="92" y="101">400</text><text x="92" y="197">200</text><text x="92" y="293">0</text></g>
                <g text-anchor="middle">
                    <text x="100" y="310">11:23:15</text><text x="187" y="310">11:23:21</text><text x="275" y="310">11:23:26</text><text x="362" y="310">11:23:32</text><text x="450" y="310">11:23:37</text><text x="537" y="310">11:23:43</text>
                    <text transform="translate(44 156) rotate(-90)" font-size="18">Data[Bytes]</text>
                </g>
                <path fill="#f00" d="M106 328h38v9h-38z" /><path fill="#5a8c50" d="M242 328h38v9h-38z" /><path stroke="#008000" stroke-width="2" d="M242 329h38" />
                <text x="150" y="338">Total Read</text><text x="285" y="338">Total Write</text>
            </svg>
        </div>

        <div class="flex pl-[35px] pt-[14px] pb-2 text-[17px] leading-6 font-light text-[#aaafbd]">
            <div class="w-[279px]">
                <p class="text-white font-normal">You</p>
                <p class="mt-[3px]">Private IP: <span class="ml-1">100.64.0.113</span></p>
            </div>
            <div class="w-[140px]">
                <p>Total Read</p>
                <p class="mt-[7px] text-[#ff3338] flex items-center gap-1 pl-1"><svg class="w-[15px] h-4" viewBox="0 0 15 16"><path d="M7.500 16V1.500M1 8l6.500-6.500L14 8" fill="none" stroke="currentColor" stroke-width="1.800" /></svg>0 Bytes</p>
                <p class="mt-[13px]">Duration</p>
                <p class="mt-[7px] text-white font-normal">00:00:52</p>
            </div>
            <div>
                <p>Total Write</p>
                <p class="mt-[7px] text-[#41a80c] flex items-center gap-1 pl-1"><svg class="w-[15px] h-4" viewBox="0 0 15 16"><path d="M7.500 0v14.500M1 8l6.500 6.500L14 8" fill="none" stroke="currentColor" stroke-width="1.800" /></svg>4 Bytes</p>
            </div>
        </div>
    </div>

    <script>
        // Minor roads: links between the points of a jittered grid
        let seed = 7;
        const rand = () => (seed = (seed * 16807) % 2147483647) / 2147483647;
        const step = 13;
        const cols = 76;
        const rows = 36;
        const pts = [];
        for (let r = 0; r < rows; r++) {
            for (let c = 0; c < cols; c++) {
                pts.push([440 + c * step + rand() * 11, -8 + r * step + rand() * 11]);
            }
        }
        let d = '';
        const link = (a, b) => {
            const mx = (a[0] + b[0]) / 2 + rand() * 5 - 2.5;
            const my = (a[1] + b[1]) / 2 + rand() * 5 - 2.5;
            d += `M${a[0].toFixed(1)} ${a[1].toFixed(1)}Q${mx.toFixed(1)} ${my.toFixed(1)} ${b[0].toFixed(1)} ${b[1].toFixed(1)}`;
        };
        for (let r = 0; r < rows - 1; r++) {
            for (let c = 0; c < cols - 1; c++) {
                const i = r * cols + c;
                if (rand() > .35) link(pts[i], pts[i + 1]);
                if (rand() > .35) link(pts[i], pts[i + cols]);
            }
        }
        const road = document.createElementNS('http://www.w3.org/2000/svg', 'path');
        road.setAttribute('d', d);
        document.getElementById('minor').appendChild(road);
    </script>
</body>
</html>
